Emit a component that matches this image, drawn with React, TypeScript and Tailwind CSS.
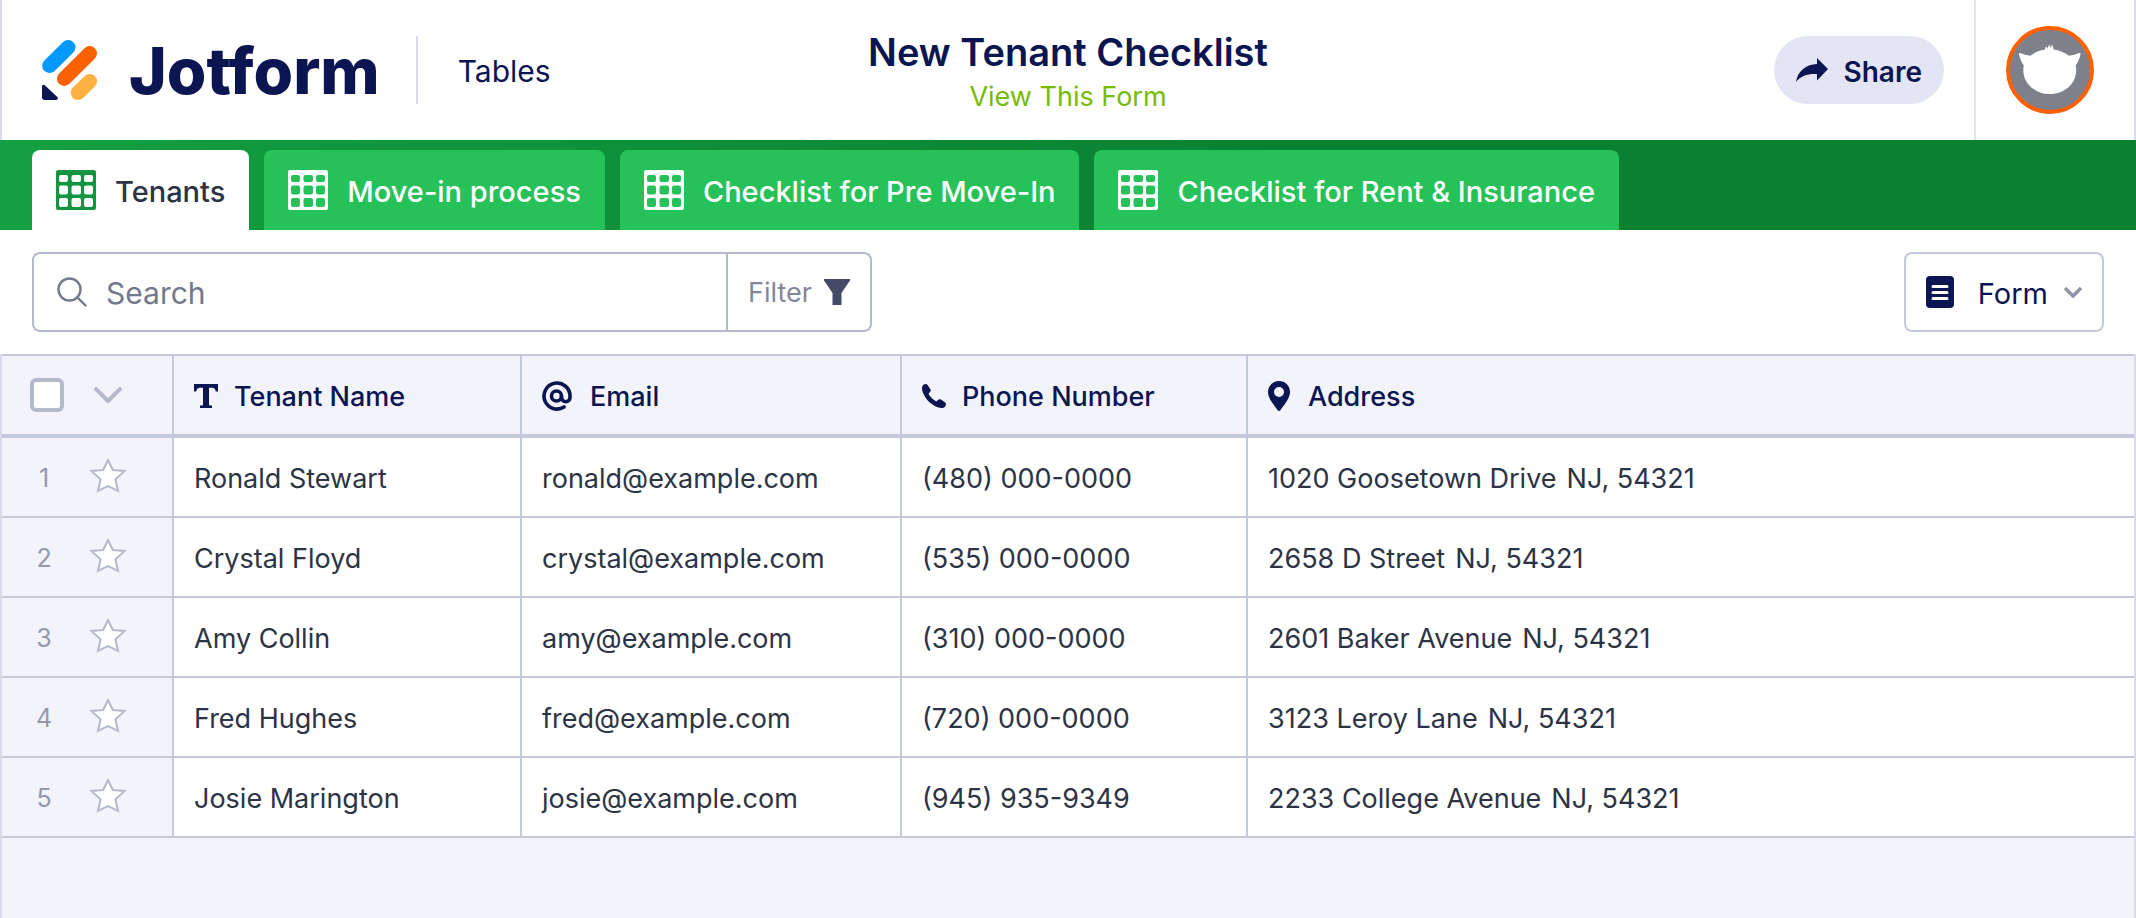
import { useState } from "react";

const tabs = ["Tenants", "Move-in process", "Checklist for Pre Move-In", "Checklist for Rent & Insurance"];

const tenants = [
  { name: "Ronald Stewart", email: "ronald@example.com", phone: "(480) 000-0000", street: "1020 Goosetown Drive", region: "NJ, 54321" },
  { name: "Crystal Floyd", email: "crystal@example.com", phone: "(535) 000-0000", street: "2658 D Street", region: "NJ, 54321" },
  { name: "Amy Collin", email: "amy@example.com", phone: "(310) 000-0000", street: "2601 Baker Avenue", region: "NJ, 54321" },
  { name: "Fred Hughes", email: "fred@example.com", phone: "(720) 000-0000", street: "3123 Leroy Lane", region: "NJ, 54321" },
  { name: "Josie Marington", email: "josie@example.com", phone: "(945) 935-9349", street: "2233 College Avenue", region: "NJ, 54321" },
];

function LogoMark() {
  return (
    <svg viewBox="0 0 55 60" className="h-[60px] w-[55px]" aria-hidden="true">
      <g fill="none" strokeLinecap="round">
        <path d="M7.500 25.700L26.200 7.300" stroke="#0099ff" strokeWidth="14.600" />
        <path d="M22.300 38.700L47.700 13.300" stroke="#ff6100" strokeWidth="14.600" />
        <path d="M36 52.700L47.700 41.300" stroke="#ffb142" strokeWidth="14.600" />
      </g>
      <path d="M0 46.500c0-1.900 1.600-2.400 2.800-1.200l12.500 11.800c1.300 1.200.6 2.900-1.200 2.900H2.500C1 60 0 59 0 57.500z" fill="#0a1551" />
    </svg>
  );
}

function GridIcon() {
  return (
    <svg viewBox="0 0 40 40" className="size-10 shrink-0" fill="currentColor" fillRule="evenodd" aria-hidden="true">
      <path d="M2 0h36a2 2 0 0 1 2 2v36a2 2 0 0 1-2 2H2a2 2 0 0 1-2-2V2a2 2 0 0 1 2-2zM5 5a2 2 0 0 0-2 2v3a2 2 0 0 0 2 2h5a2 2 0 0 0 2-2V7a2 2 0 0 0-2-2zM17.500 5a2 2 0 0 0-2 2v3a2 2 0 0 0 2 2h5.500a2 2 0 0 0 2-2V7a2 2 0 0 0-2-2zM30 5a2 2 0 0 0-2 2v3a2 2 0 0 0 2 2h5a2 2 0 0 0 2-2V7a2 2 0 0 0-2-2zM5 15.500a2 2 0 0 0-2 2v5a2 2 0 0 0 2 2h5a2 2 0 0 0 2-2v-5a2 2 0 0 0-2-2zM17.500 15.500a2 2 0 0 0-2 2v5a2 2 0 0 0 2 2h5.500a2 2 0 0 0 2-2v-5a2 2 0 0 0-2-2zM30 15.500a2 2 0 0 0-2 2v5a2 2 0 0 0 2 2h5a2 2 0 0 0 2-2v-5a2 2 0 0 0-2-2zM5 28a2 2 0 0 0-2 2v5a2 2 0 0 0 2 2h5a2 2 0 0 0 2-2v-5a2 2 0 0 0-2-2zM17.500 28a2 2 0 0 0-2 2v5a2 2 0 0 0 2 2h5.500a2 2 0 0 0 2-2v-5a2 2 0 0 0-2-2zM30 28a2 2 0 0 0-2 2v5a2 2 0 0 0 2 2h5a2 2 0 0 0 2-2v-5a2 2 0 0 0-2-2z" />
    </svg>
  );
}

function AvatarIcon() {
  return (
    <svg viewBox="0 0 88 88" className="size-22" aria-hidden="true">
      <circle cx="44" cy="44" r="42" fill="#7e808c" stroke="#ff6100" strokeWidth="4" />
      <path
        fill="#fff"
        d="M14 27c3 1.200 7 2.300 10.500 2.800 4-3.300 9-5.500 14.500-6.300.2-1.500.7-2.600 1.500-3 .4.800.7 1.500.9 2.300.6-1.700 1.200-3.300 2-4 .8 1.200 1 2.300 1.200 3.500.5-1.500 1-3 1.700-3.600.8 1.500 1.200 3 1.200 4.800 5.500.8 11.500 3 15.500 6.300 3.700-.5 7.200-1.600 10.500-2.800.8 0 1.200.6 1 1.400-1 4-2.600 8-4.800 11.100.3 1.600.5 3 .5 4.500C70.200 58 58.500 68 44 68S17.300 58 17.300 44c0-1.700.1-3 .5-4.500-2.300-3.300-4-7.100-4.800-11.100-.1-.8.200-1.400 1-1.400z"
      />
    </svg>
  );
}

function TextIcon() {
  return (
    <svg viewBox="0 0 24 24" className="h-6 w-6" fill="currentColor" aria-hidden="true">
      <path d="M0 0h24v7.500h-2.200c-.5-2.500-1.500-3.700-3.800-3.700h-3V20c0 1 .5 1.500 1.500 1.500H18V24H6v-2.500h1.500c1 0 1.500-.5 1.500-1.500V3.800H6c-2.300 0-3.300 1.200-3.800 3.700H0z" />
    </svg>
  );
}

function AtIcon() {
  return (
    <svg viewBox="0 0 30 30" className="size-[30px]" fill="none" stroke="currentColor" strokeWidth="3.600" strokeLinecap="round" aria-hidden="true">
      <circle cx="14.500" cy="15" r="5" />
      <path d="M19.500 15v1.500a4.200 4.200 0 0 0 8.500 0V15a13 13 0 1 0-6 11" />
    </svg>
  );
}

function PhoneIcon() {
  return (
    <svg viewBox="0 0 24 24" className="h-6 w-6" fill="currentColor" aria-hidden="true">
      <path d="M1.500.8C2.900-.2 4.600-.2 5.400.8l3 4.400c.7 1 .3 2.200-.5 3L6.500 9.600c1 2.700 4.900 6.700 7.900 7.900l1.500-1.400c.8-.8 2-1.200 3-.5l4.300 3c1 .8 1 2.500 0 3.900C21.800 24.200 19 24.300 16.500 23.500 9 21 3 15 .5 7.500-.3 5-.2 2.200 1.500.8z" />
    </svg>
  );
}

function PinIcon() {
  return (
    <svg viewBox="0 0 22 30" className="h-[30px] w-[22px]" fill="currentColor" fillRule="evenodd" aria-hidden="true">
      <path d="M11 0c6.200 0 11 4.700 11 11 0 6.500-6 13-9.500 18-.8 1.200-2.200 1.200-3 0C6 24 0 17.500 0 11 0 4.700 4.800 0 11 0zm0 6a5 5 0 1 0 0 10 5 5 0 0 0 0-10z" />
    </svg>
  );
}

function StarIcon() {
  return (
    <svg viewBox="0 0 36 36" className="size-9" fill="#fff" stroke="#b4b9cb" strokeWidth="2" aria-hidden="true">
      <path d="M18 2.200L22.900 12l11.700 1-9.200 8.300 2.600 11.500-10-4.800-10 4.800 2.600-11.500L1.400 13l11.700-1z" />
    </svg>
  );
}

const columns = [
  { label: "Tenant Name", icon: TextIcon, widthClass: "w-[348px]", gapClass: "gap-4" },
  { label: "Email", icon: AtIcon, widthClass: "w-[380px]", gapClass: "gap-[18px]" },
  { label: "Phone Number", icon: PhoneIcon, widthClass: "w-[346px]", gapClass: "gap-4" },
  { label: "Address", icon: PinIcon, widthClass: "", gapClass: "gap-[18px]" },
];

function Header() {
  return (
    <header className="grid h-[140px] grid-cols-[1fr_auto_1fr] items-center border-x-2 border-[#d8dae9] bg-white">
      <div className="flex items-center pl-10">
        <a href="#home" aria-label="Jotform" className="flex items-center gap-8">
          <LogoMark />
          <span className="pt-0.5 text-[64px] leading-[68px] font-extrabold">Jotform</span>
        </a>
        <span className="ml-9 h-17 w-0.5 bg-[#d8dae9]" />
        <a href="#tables" className="ml-10 pt-0.5 text-[30px]">Tables</a>
      </div>
      <div className="flex flex-col items-center">
        <h1 className="text-[38px] leading-[54px] font-semibold">New Tenant Checklist</h1>
        <a href="#form" className="text-[27px] leading-9 text-[#78bb07]">View This Form</a>
      </div>
      <div className="flex h-full items-center justify-end">
        <button type="button" className="mr-[30px] flex h-17 items-center gap-4 rounded-full bg-[#e3e5f5] px-[22px] text-[28px] font-semibold">
          <svg viewBox="0 0 32 24" className="h-6 w-8" fill="currentColor" aria-hidden="true">
            <path d="M21 0l11 11-11 11.500v-6.500C12 15.500 5 17.500 0 24 1.500 14 9 6.500 21 6z" />
          </svg>
          <span className="pt-1">Share</span>
        </button>
        <div className="flex h-full items-center border-l-2 border-[#dfe3ec] pr-10 pl-[30px]">
          <button type="button" aria-label="Account" className="rounded-full">
            <AvatarIcon />
          </button>
        </div>
      </div>
    </header>
  );
}

function TabBar() {
  const [active, setActive] = useState(0);

  return (
    <nav className="flex h-[90px] items-end gap-[15px] bg-linear-to-r from-[#139f42] to-[#0a8131] to-60% px-8" aria-label="Sheets">
      {tabs.map((tab, index) => (
        <button
          key={tab}
          type="button"
          onClick={() => setActive(index)}
          className={`flex h-20 items-center gap-[19px] rounded-t-lg px-6 text-[29px] font-medium whitespace-nowrap ${
            index === active ? "bg-white text-[#139440]" : "bg-[#26c259] text-white"
          }`}
        >
          <GridIcon />
          <span className={`pt-1 ${index === active ? "text-[#2c3345]" : ""}`}>{tab}</span>
        </button>
      ))}
    </nav>
  );
}

function Toolbar() {
  return (
    <div className="flex items-center justify-between bg-white px-8 py-[22px]">
      <div className="flex h-20 w-[840px] rounded-lg border-2 border-[#b4b9cb]">
        <label className="flex flex-1 items-center gap-[19px] pl-[23px]">
          <svg viewBox="0 0 30 30" className="size-[30px]" fill="none" stroke="#73788c" strokeWidth="2.400" strokeLinecap="round" aria-hidden="true">
            <circle cx="12.500" cy="12.500" r="11" />
            <path d="M20.500 20.500l8 8" />
          </svg>
          <input type="search" aria-label="Search" placeholder="Search" className="min-w-0 flex-1 pt-0.5 text-[30px] outline-none placeholder:text-[#73788c]" />
        </label>
        <button type="button" className="flex items-center gap-3 border-l-2 border-[#b4b9cb] px-5 text-[27px] text-[#83869a]">
          <span className="pt-0.5">Filter</span>
          <svg viewBox="0 0 26 26" className="size-[26px]" fill="#454b66" aria-hidden="true">
            <path d="M0 0h26v1.500L17.500 14v12h-9V14L0 1.500z" />
          </svg>
        </button>
      </div>
      <button type="button" className="flex h-20 items-center rounded-lg border-2 border-[#c4c9da] px-5 text-[29px]">
        <svg viewBox="0 0 28 32" className="h-8 w-7" aria-hidden="true">
          <rect width="28" height="32" rx="4" fill="#0a1551" />
          <path d="M7 10.500h14M7 16.500h14M7 22.500h14" stroke="#fff" strokeWidth="3" strokeLinecap="round" />
        </svg>
        <span className="ml-6 pt-1">Form</span>
        <svg viewBox="0 0 18 11" className="ml-4 h-[11px] w-[18px]" fill="none" stroke="#9095a8" strokeWidth="3.500" aria-hidden="true">
          <path d="M1 1l8 8 8-8" />
        </svg>
      </button>
    </div>
  );
}

function TenantTable() {
  return (
    <table className="w-full table-fixed border-separate border-spacing-0 text-left text-[27px]">
      <thead>
        <tr className="h-[84px]">
          <th className="w-[172px] border-t-2 border-r-2 border-b-4 border-[#c4c9da] p-0">
            <div className="flex items-center gap-[30px] pl-7">
              <input type="checkbox" aria-label="Select all" className="size-[34px] appearance-none rounded-md border-4 border-[#b4b9cb] bg-white" />
              <button type="button" aria-label="Row options">
                <svg viewBox="0 0 28 17" className="h-[17px] w-7" fill="none" stroke="#b4b9cb" strokeWidth="4" strokeLinecap="round" strokeLinejoin="round" aria-hidden="true">
                  <path d="M2 2l12 12L26 2" />
                </svg>
              </button>
            </div>
          </th>
          {columns.map(({ label, icon: Icon, widthClass, gapClass }) => (
            <th key={label} className={`border-t-2 border-r-2 border-b-4 border-[#c4c9da] px-5 pt-0.5 pb-0 font-medium last:border-r-0 ${widthClass}`}>
              <div className={`flex items-center ${gapClass}`}>
                <Icon />
                <span className="pt-0.5">{label}</span>
              </div>
            </th>
          ))}
        </tr>
      </thead>
      <tbody className="text-[#2c3345]">
        {tenants.map((tenant, index) => (
          <tr key={tenant.email} className="h-20 *:border-r-2 *:border-b-2 *:border-[#c4c9da] *:px-5 *:pt-1 *:pb-0 *:last:border-r-0">
            <td>
              <div className="flex items-center gap-6 text-[25px] text-[#9598aa]">
                <span className="w-11 text-center">{index + 1}</span>
                <button type="button" aria-label={`Star ${tenant.name}`} className="pb-1.5">
                  <StarIcon />
                </button>
              </div>
            </td>
            <td className="bg-white">{tenant.name}</td>
            <td className="bg-white">{tenant.email}</td>
            <td className="bg-white">{tenant.phone}</td>
            <td className="bg-white">
              <span className="mr-2.5">{tenant.street}</span>
              <span>{tenant.region}</span>
            </td>
          </tr>
        ))}
      </tbody>
    </table>
  );
}

export default function App() {
  return (
    <div className="flex min-h-screen flex-col bg-white font-['Inter','Liberation_Sans',sans-serif] text-[#0a1551]">
      <Header />
      <TabBar />
      <Toolbar />
      <main className="flex-1 border-x-2 border-[#d8dae9] bg-[#f3f3fc]">
        <TenantTable />
      </main>
    </div>
  );
}
